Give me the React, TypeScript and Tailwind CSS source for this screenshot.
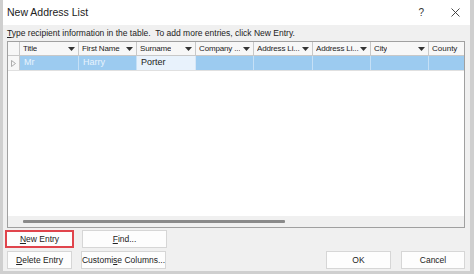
import React from 'react';

const columns = [
  { name: 'Title', w: 'w-[59px]' },
  { name: 'First Name', w: 'w-[58px]' },
  { name: 'Surname', w: 'w-[59px]' },
  { name: 'Company ...', w: 'w-[58px]' },
  { name: 'Address Li...', w: 'w-[59px]' },
  { name: 'Address Li...', w: 'w-[58px]' },
  { name: 'City', w: 'w-[58px]' },
];

const Arrow = () => (
  <svg width="7" height="4" viewBox="0 0 7 4" className="shrink-0">
    <path d="M0 0 H7 L3.5 4 Z" fill="#333" />
  </svg>
);

const Btn: React.FC<{ label: React.ReactNode; w: string; red?: boolean }> = ({ label, w, red }) => (
  <div
    className={`${w} h-[18px] flex items-center justify-center bg-[#fdfdfd] border text-[8.5px] text-[#222] whitespace-nowrap ${
      red ? 'border-[#e0444c] border-2' : 'border-[#d6d6d6]'
    }`}
  >
    {label}
  </div>
);

export default function App() {
  return (
    <div
      className="w-[474px] h-[274px] bg-[#cfcfcf] pl-[3px] pr-[4px] pb-[3px] overflow-hidden"
      style={{ fontFamily: '"Liberation Sans", Arial, sans-serif' }}
    >
      <div className="h-full flex flex-col bg-[#f0f0f0]">
        {/* Title bar */}
        <div className="h-[25px] bg-white flex items-center pl-[4px] pr-[10px] shrink-0">
          <span className="text-[10.5px] text-[#222]">New Address List</span>
          <span className="ml-auto text-[10px] text-[#333]">?</span>
          <svg width="9" height="9" viewBox="0 0 9 9" className="ml-[27px]">
            <path d="M0.5 0.5 L8.5 8.5 M8.5 0.5 L0.5 8.5" stroke="#333" strokeWidth="0.9" />
          </svg>
        </div>

        <div className="flex-1 flex flex-col px-[4px] pt-[3px]">
          <div className="text-[8.5px] text-[#222] leading-[11px] h-[13px] whitespace-nowrap">
            <span className="underline">T</span>ype recipient information in the table.&nbsp; To add more entries, click New Entry.
          </div>

          {/* Table */}
          <div className="h-[187px] bg-white border border-[#a0a0a0] flex flex-col shrink-0 mr-[1px]">
            <div className="flex h-[14px] bg-[#f7f7f7] border-b border-[#c8c8c8]">
              <div className="w-[12px] border-r border-[#c8c8c8] shrink-0" />
              {columns.map((c, i) => (
                <div
                  key={i}
                  className={`${c.w} shrink-0 border-r border-[#c8c8c8] flex items-center justify-between gap-[1px] pl-[3px] pr-[3px] text-[8px] tracking-[-0.15px] text-[#222]`}
                >
                  <span className="whitespace-nowrap overflow-hidden">{c.name}</span>
                  <Arrow />
                </div>
              ))}
              <div className="flex-1 flex items-center pl-[3px] text-[8px] text-[#222]">County</div>
            </div>
            <div className="flex h-[15px] border-b border-[#e0e0e0]">
              <div className="w-[12px] shrink-0 border-r border-[#c8c8c8] bg-[#f7f7f7] flex items-center justify-center">
                <svg width="5" height="7" viewBox="0 0 5 7">
                  <path d="M0.5 0.5 L4.5 3.5 L0.5 6.5 Z" fill="none" stroke="#999" strokeWidth="0.8" />
                </svg>
              </div>
              {columns.map((c, i) => (
                <div
                  key={i}
                  className={`${c.w} shrink-0 border-r flex items-center pl-[4px] text-[9px] ${
                    i === 2
                      ? 'bg-[#e8f2fc] border-[#d6e6f6] text-[#222]'
                      : 'bg-[#9ccbf0] border-[#c5e0f6] text-[#e8f3fd]'
                  }`}
                >
                  {i === 0 ? 'Mr' : i === 1 ? 'Harry' : i === 2 ? 'Porter' : ''}
                </div>
              ))}
              <div className="flex-1 bg-[#9ccbf0]" />
            </div>
            <div className="flex-1" />
            <div className="h-[11px] bg-[#f0f0f0] flex items-center pl-[15px]">
              <div className="w-[262px] h-[3px] bg-[#8a8a8a] rounded-[1px]" />
            </div>
          </div>

          {/* Buttons */}
          <div className="flex items-end mt-[2px] pb-[4px] flex-1">
            <div className="flex flex-col gap-[3px]">
              <div className="flex gap-[8px] -ml-[2px]">
                <Btn w="w-[69px]" red label={<span><span className="underline">N</span>ew Entry</span>} />
                <Btn w="w-[85px]" label={<span><span className="underline">F</span>ind...</span>} />
              </div>
              <div className="flex gap-[9px]">
                <Btn w="w-[65px]" label={<span><span className="underline">D</span>elete Entry</span>} />
                <Btn w="w-[85px]" label={<span>Customi<span className="underline">s</span>e Columns...</span>} />
              </div>
            </div>
            <div className="ml-auto flex gap-[10px] mr-[1px]">
              <Btn w="w-[65px]" label="OK" />
              <Btn w="w-[64px]" label="Cancel" />
            </div>
          </div>
        </div>
      </div>
    </div>
  );
}
